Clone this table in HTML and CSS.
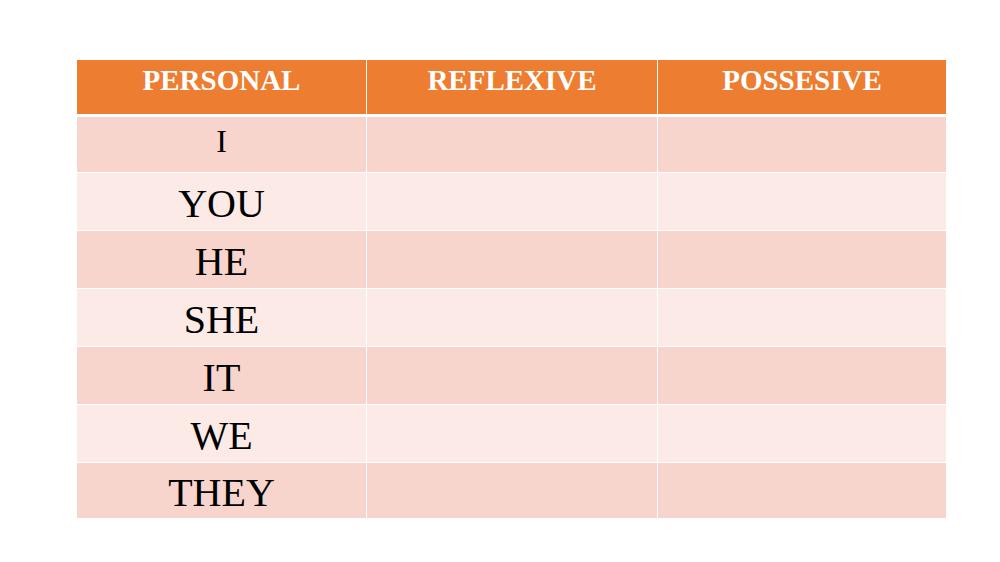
FILE: index.html
```html
<!DOCTYPE html>
<html lang="en">
<head>
<meta charset="utf-8">
<title>Pronouns</title>
<link rel="stylesheet" href="styles.css">
</head>
<body>
<div class="page">
  <div class="table">
    <div class="head">
      <div class="hcell">PERSONAL</div>
      <div class="hcell">REFLEXIVE</div>
      <div class="hcell">POSSESIVE</div>
    </div>
    <div class="body">
      <div class="cell odd word small">I</div><div class="cell odd"></div><div class="cell odd"></div>
      <div class="cell even word">YOU</div><div class="cell even"></div><div class="cell even"></div>
      <div class="cell odd word">HE</div><div class="cell odd"></div><div class="cell odd"></div>
      <div class="cell even word">SHE</div><div class="cell even"></div><div class="cell even"></div>
      <div class="cell odd word">IT</div><div class="cell odd"></div><div class="cell odd"></div>
      <div class="cell even word">WE</div><div class="cell even"></div><div class="cell even"></div>
      <div class="cell odd word">THEY</div><div class="cell odd"></div><div class="cell odd"></div>
    </div>
  </div>
</div>
</body>
</html>
```

FILE: styles.css
```css
html, body {
  margin: 0;
  padding: 0;
  background: #ffffff;
}
.page {
  width: 1000px;
  height: 562px;
  padding: 60px 0 0 77px;
  box-sizing: border-box;
  font-family: "Liberation Serif", "Times New Roman", serif;
}
.table {
  display: flex;
  flex-direction: column;
  gap: 3px;
  width: 869px;
}
.head {
  display: grid;
  grid-template-columns: 289px 290px 288px;
  column-gap: 1px;
  height: 54px;
}
.hcell {
  background: #ed7d31;
  color: #ffffff;
  font-weight: bold;
  font-size: 29px;
  text-align: center;
  padding-top: 4px;
  box-sizing: border-box;
}
.body {
  display: grid;
  grid-template-columns: 289px 290px 288px;
  grid-template-rows: 55px 57px 57px 57px 57px 57px 55px;
  gap: 1px;
}
.cell {
  display: flex;
  align-items: center;
  justify-content: center;
  color: #000000;
  font-size: 40px;
}
.word {
  padding-top: 3px;
  box-sizing: border-box;
}
.word.small {
  font-size: 32px;
  padding-top: 0;
  padding-bottom: 6px;
}
.odd {
  background: #f7d5cc;
}
.even {
  background: #fbeae6;
}
```
